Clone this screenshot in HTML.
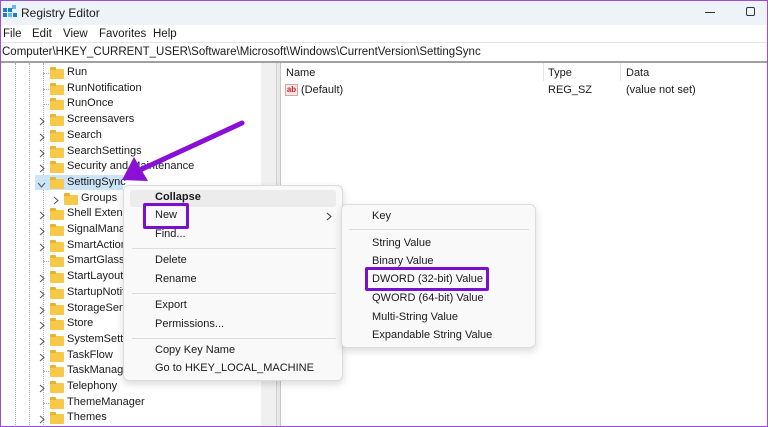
<!DOCTYPE html>
<html><head><style>
*{margin:0;padding:0;box-sizing:border-box}
body{width:768px;height:427px;overflow:hidden;background:#fff;font-family:"Liberation Sans",sans-serif;font-size:11px;color:#1a1a1a;position:relative}
.a{position:absolute;white-space:nowrap}
.fold{position:absolute;width:14px;height:10px;background:#f7c948;border-radius:1px}
.fold:before{content:"";position:absolute;left:0;top:-2px;width:6px;height:3px;background:#e8b232;border-radius:1px 1px 0 0}
.chev{position:absolute}
.dot{position:absolute;border-left:1px dotted #aaa}
.menu{position:absolute;background:#f9f9f9;border:1px solid #dcdcdc;border-radius:6px;box-shadow:0 3px 8px rgba(0,0,0,.15)}
.sep{position:absolute;height:1px;background:#ddd}
</style></head><body>
<div class="a" style="left:0;top:0;width:768px;height:25px;background:#eef2f9"></div>
<svg class="a" style="left:3px;top:5px" width="14" height="14"><rect x="0" y="3" width="4" height="4" fill="#1a82c9"/><rect x="5" y="3" width="4" height="4" fill="#1a82c9"/><rect x="0" y="8" width="4" height="4" fill="#1a82c9"/><rect x="5" y="8" width="4" height="4" fill="#6bb7e8"/><rect x="10" y="8" width="4" height="4" fill="#1a82c9"/><rect x="9" y="0" width="4" height="4" fill="#6bb7e8"/></svg>
<div class="a" style="left:21px;top:6px;font-size:12px">Registry Editor</div>
<div class="a" style="left:705px;top:12px;width:10px;height:1px;background:#333"></div>
<div class="a" style="left:746px;top:7px;width:9px;height:9px;border:1px solid #333;border-radius:2px"></div>
<div class="a" style="left:3px;top:28px;font-size:11.5px">File</div>
<div class="a" style="left:32px;top:28px;font-size:11.5px">Edit</div>
<div class="a" style="left:63px;top:28px;font-size:11.5px">View</div>
<div class="a" style="left:99px;top:28px;font-size:11.5px">Favorites</div>
<div class="a" style="left:153px;top:28px;font-size:11.5px">Help</div>
<div class="a" style="left:0;top:42px;width:768px;height:1px;background:#e6e6e6"></div>
<div class="a" style="left:2px;top:46px;font-size:11.5px">Computer\HKEY_CURRENT_USER\Software\Microsoft\Windows\CurrentVersion\SettingSync</div>
<div class="a" style="left:0;top:61px;width:768px;height:2px;background:#a0a0a0"></div>
<div class="a" style="left:261px;top:63px;width:15px;height:364px;background:#f0f0f0"></div>
<div class="a" style="left:276px;top:63px;width:1px;height:364px;background:#d0d0d0"></div>
<div class="a" style="left:277px;top:63px;width:3px;height:364px;background:#e8e8e8"></div>
<div class="a" style="left:280px;top:63px;width:1px;height:364px;background:#c8c8c8"></div>
<div class="dot" style="left:15px;top:63px;height:364px"></div>
<div class="dot" style="left:29px;top:63px;height:364px"></div>
<div class="dot" style="left:43px;top:63px;height:364px"></div>
<div class="a" style="left:35px;top:175px;width:88px;height:15px;background:#cce4f7"></div>
<div id="tree"></div>
<script>
var items=[["Run",0,0],["RunNotification",0,0],["RunOnce",0,0],["Screensavers",1,0],["Search",1,0],["SearchSettings",1,0],["Security and Maintenance",1,0],["SettingSync",2,0],["Groups",1,1],["Shell Extensions",1,0],["SignalManager",1,0],["SmartActionPlatform",1,0],["SmartGlass",0,0],["StartLayout",1,0],["StartupNotify",1,0],["StorageSense",1,0],["Store",1,0],["SystemSettings",1,0],["TaskFlow",1,0],["TaskManager",0,0],["Telephony",1,0],["ThemeManager",0,0],["Themes",1,0]];
var h="";
items.forEach(function(it,i){var y=67+i*15.7;var x=it[2]?64:50;
if(it[1]==1)h+='<svg class="chev" style="left:'+(x-11)+'px;top:'+(y+3)+'px" width="6" height="9"><polyline points="1,1 5,4.5 1,8" fill="none" stroke="#555" stroke-width="1"/></svg>';
else if(it[1]==2)h+='<svg class="chev" style="left:'+(x-13)+'px;top:'+(y+5)+'px" width="9" height="6"><polyline points="1,1 4.5,5 8,1" fill="none" stroke="#555" stroke-width="1"/></svg>';
else h+='<div class="a" style="left:'+(x-7)+'px;top:'+(y+6)+'px;width:6px;border-top:1px dotted #aaa"></div>';
h+='<div class="fold" style="left:'+x+'px;top:'+(y+2)+'px"></div><div class="a" style="left:'+(x+17)+'px;top:'+(y-1)+'px">'+it[0]+'</div>';});
document.getElementById('tree').innerHTML=h;
</script>
<div class="a" style="left:286px;top:67px">Name</div>
<div class="a" style="left:543px;top:63px;width:1px;height:18px;background:#e5e5e5"></div>
<div class="a" style="left:548px;top:67px">Type</div>
<div class="a" style="left:620px;top:63px;width:1px;height:18px;background:#e5e5e5"></div>
<div class="a" style="left:626px;top:67px">Data</div>
<div class="a" style="left:285px;top:84px;width:13px;height:12px;background:#fbe7e7;border:1px solid #d9a3a3;color:#c62828;font-size:8px;font-weight:bold;line-height:10px;text-align:center">ab</div>
<div class="a" style="left:301px;top:84px">(Default)</div>
<div class="a" style="left:548px;top:84px">REG_SZ</div>
<div class="a" style="left:626px;top:84px">(value not set)</div>
<div class="menu" style="left:123px;top:185px;width:220px;height:196px">
<div class="a" style="left:6px;top:4px;width:206px;height:17px;background:#ececec;border-radius:3px"></div>
<div class="a" style="left:31px;top:5px;font-weight:bold">Collapse</div>
<div class="a" style="left:31px;top:23px">New</div>
<svg class="a" style="left:202px;top:26px" width="6" height="9"><polyline points="1,1 5,4.5 1,8" fill="none" stroke="#333" stroke-width="1"/></svg>
<div class="a" style="left:31px;top:42px">Find...</div>
<div class="sep" style="left:8px;top:62px;width:204px"></div>
<div class="a" style="left:31px;top:68px">Delete</div>
<div class="a" style="left:31px;top:87px">Rename</div>
<div class="sep" style="left:8px;top:107px;width:204px"></div>
<div class="a" style="left:31px;top:113px">Export</div>
<div class="a" style="left:31px;top:132px">Permissions...</div>
<div class="sep" style="left:8px;top:152px;width:204px"></div>
<div class="a" style="left:31px;top:158px">Copy Key Name</div>
<div class="a" style="left:31px;top:176px">Go to HKEY_LOCAL_MACHINE</div>
</div>
<div class="menu" style="left:341px;top:204px;width:195px;height:144px">
<div class="a" style="left:30px;top:5px">Key</div>
<div class="sep" style="left:7px;top:24px;width:180px"></div>
<div class="a" style="left:30px;top:32px">String Value</div>
<div class="a" style="left:30px;top:50px">Binary Value</div>
<div class="a" style="left:30px;top:68px">DWORD (32-bit) Value</div>
<div class="a" style="left:30px;top:87px">QWORD (64-bit) Value</div>
<div class="a" style="left:30px;top:106px">Multi-String Value</div>
<div class="a" style="left:30px;top:124px">Expandable String Value</div>
</div>
<div class="a" style="left:143px;top:203px;width:46px;height:26px;border:3px solid #7a0fd0;border-radius:2px"></div>
<div class="a" style="left:365px;top:267px;width:124px;height:24px;border:3px solid #7a0fd0;border-radius:2px"></div>
<svg class="a" style="left:0;top:0" width="768" height="427"><line x1="242" y1="123" x2="140" y2="170" stroke="#8a10d8" stroke-width="5" stroke-linecap="round"/><polygon points="122,180 134,157 148,181" fill="#8a10d8"/></svg>
<div class="a" style="left:0;top:0;width:768px;height:427px;border:1px solid #9b4fd6"></div>
</body></html>
